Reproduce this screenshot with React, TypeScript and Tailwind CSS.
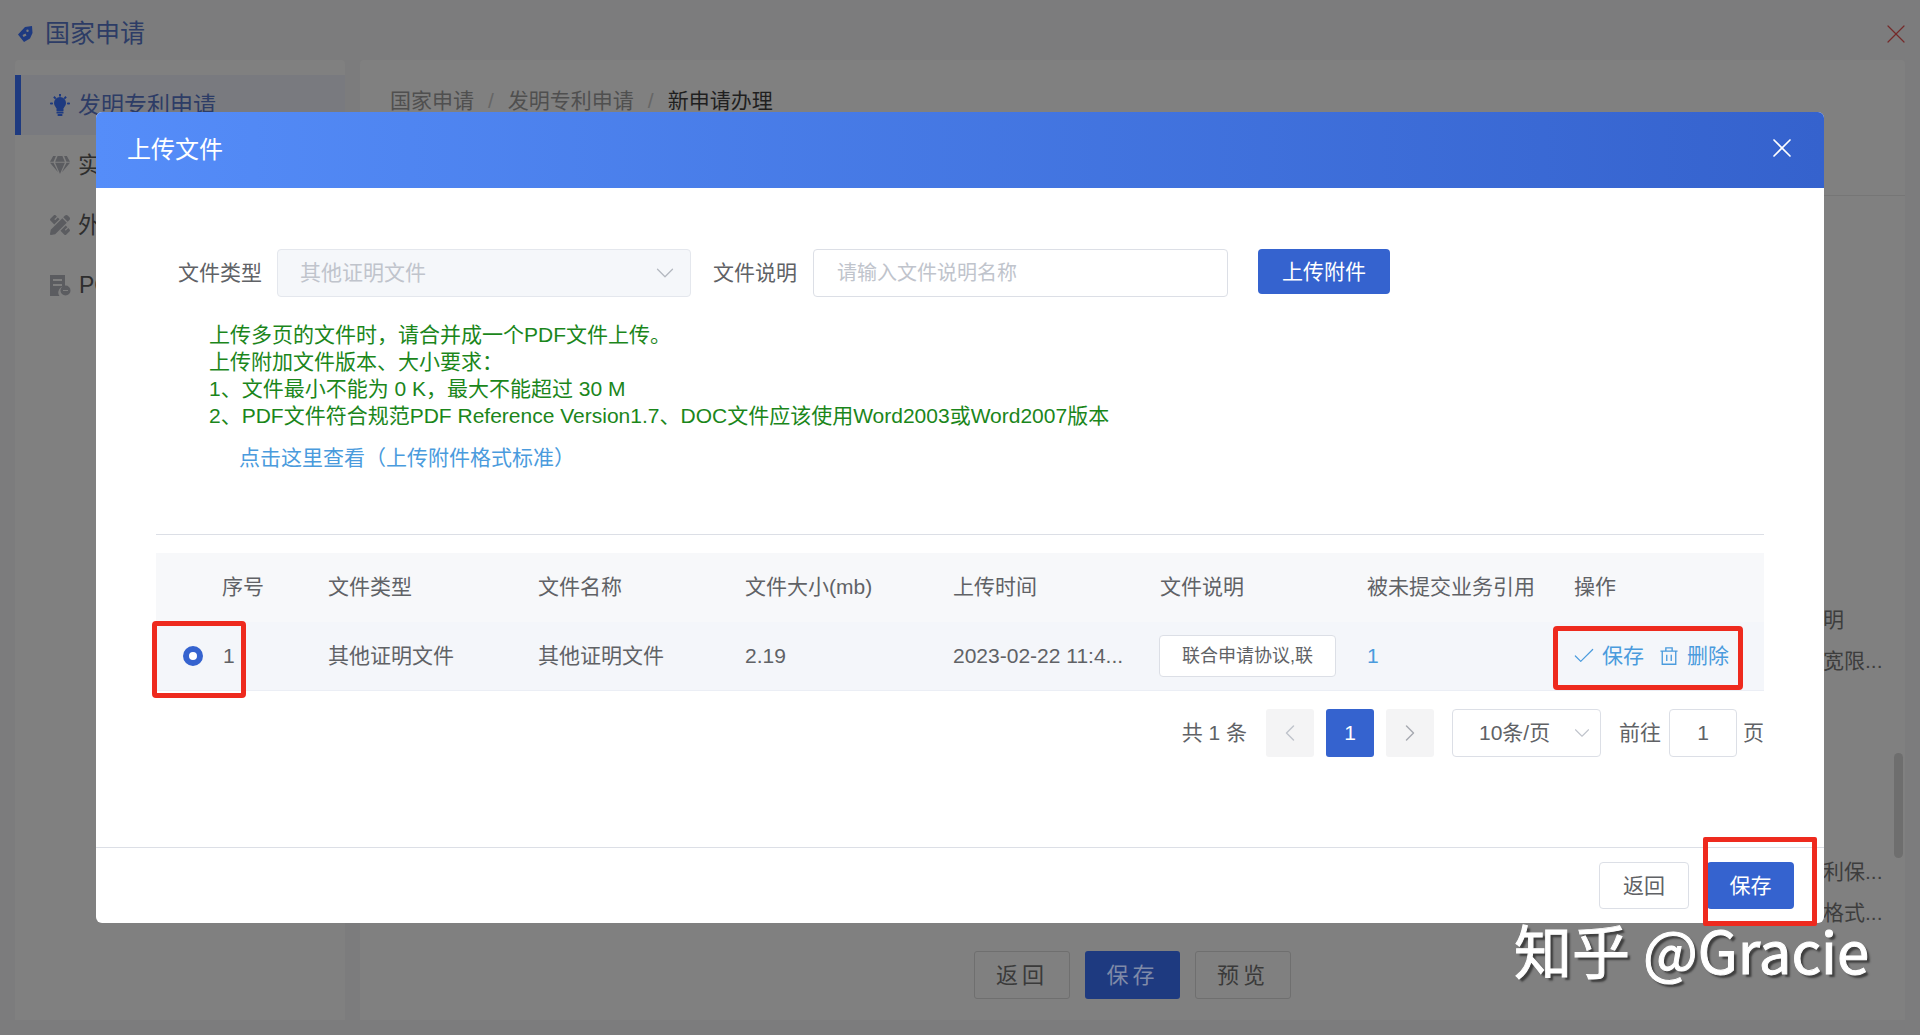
import { Check, ChevronDown, ChevronLeft, ChevronRight, X } from "lucide-react";
import { FaGem, FaPencilRuler } from "react-icons/fa";

const font = "font-['Liberation_Sans','Noto_Sans_CJK_SC',sans-serif]";

function TagIcon() {
  return (
    <svg viewBox="0 0 16 18" className="h-[18px] w-[16px]" fill="#1e3a80">
      <path d="M15 1L8 2 1 9.500 7 17l6-3.500L15.500 8zM10.500 4.500a1.200 1.200 0 1 1 0 2.400 1.200 1.200 0 0 1 0-2.400zM5.500 10l3-1.500 1 2-3 1.500z" fillRule="evenodd" />
    </svg>
  );
}

function BulbIcon() {
  return (
    <svg viewBox="0 0 20 22" className="h-[22px] w-[20px] shrink-0" fill="#1e3a80">
      <circle cx="10" cy="9" r="6" />
      <rect x="6.500" y="11" width="7" height="6" />
      <rect x="6.500" y="17.500" width="7" height="2" rx="0.5" />
      <rect x="7.500" y="20" width="5" height="2" rx="0.8" />
      <rect x="9" y="0" width="2" height="2.500" />
      <rect x="0" y="8.500" width="3" height="2" rx="0.8" />
      <rect x="17" y="8.500" width="3" height="2" rx="0.8" />
      <path d="M3.200 3.500l1.400-1.400 1.800 1.800L5 5.300zM16.800 3.500l-1.400-1.400-1.800 1.800L15 5.300z" />
    </svg>
  );
}

function FileIcon() {
  return (
    <svg viewBox="0 0 21 21" className="h-[21px] w-[21px] shrink-0" fill="#5b5c60">
      <path d="M0 0h15v11.500A6 6 0 0 0 9.500 21H0z" />
      <circle cx="15.500" cy="15.500" r="5" />
      <rect x="3" y="4" width="9" height="2" fill="#7f7f7f" />
      <rect x="3" y="9" width="9" height="2" fill="#7f7f7f" />
      <rect x="13" y="15" width="5" height="1" fill="#7f7f7f" />
    </svg>
  );
}

function TrashIcon() {
  return (
    <svg viewBox="0 0 20 20" className="h-[18px] w-[18px]" fill="none" stroke="#4a9bdd" strokeWidth="1.500">
      <path d="M0.500 4.500h19M6.500 4.500V1h7v3.500M2.500 4.500v14.700h15V4.500M7.500 8.500v7M12.500 8.500v7" />
    </svg>
  );
}

function MenuItem({ icon, label, active }: { icon: React.ReactNode; label: string; active?: boolean }) {
  return (
    <div
      className={`flex h-[60px] items-center gap-[8px] text-[23px] ${
        active ? "border-l-[6px] border-[#1e3a80] bg-[#797a7f] pl-[29px] text-[#2d3c66]" : "pl-[35px] text-[#2e2e2e]"
      }`}
    >
      {icon}
      <span className="whitespace-nowrap">{label}</span>
    </div>
  );
}

function PageBox({ children, className }: { children: React.ReactNode; className: string }) {
  return <div className={`flex h-[48px] items-center justify-center rounded-[3px] ${className}`}>{children}</div>;
}

const columns = "grid grid-cols-[160px_210px_207px_208px_207px_207px_207px_203px] items-center";

export default function App() {
  return (
    <div className={`relative h-screen w-full overflow-hidden bg-[#7c7c7d] ${font}`}>
      {/* page behind the dialog */}
      <div className="flex h-[60px] items-center pl-[17px] pt-[7px]">
        <TagIcon />
        <span className="ml-[12px] text-[25px] text-[#2d3c66]">国家申请</span>
        <X className="ml-auto mr-[8px] h-[32px] w-[32px] text-[#752a2a]" strokeWidth={0.9} />
      </div>
      <div className="flex h-[960px] gap-[15px] px-[15px]">
        <aside className="flex w-[330px] flex-col rounded-t-[4px] bg-[#808080] pt-[15px]">
          <MenuItem active icon={<BulbIcon />} label="发明专利申请" />
          <MenuItem icon={<FaGem className="h-[20px] w-[20px] shrink-0 text-[#5b5c60]" />} label="实用新型专利申请" />
          <MenuItem icon={<FaPencilRuler className="h-[20px] w-[20px] shrink-0 text-[#5b5c60]" />} label="外观设计专利申请" />
          <MenuItem icon={<FileIcon />} label="PCT国际申请" />
        </aside>
        <main className="flex flex-1 flex-col rounded-t-[4px] bg-[#808080]">
          <div className="flex h-[136px] items-start gap-[14px] border-b border-[#767676] pl-[30px] pt-[27px] text-[21px] leading-[28px] text-[#4f4f4f]">
            <span>国家申请</span>
            <span className="text-[#666]">/</span>
            <span>发明专利申请</span>
            <span className="text-[#666]">/</span>
            <span className="text-[#1f1f1f]">新申请办理</span>
          </div>
          <div className="flex flex-1 justify-between">
            <div className="flex flex-1 flex-col items-center justify-end pb-[21px]">
              <div className="flex gap-[15px] pl-[82px] text-[22px] tracking-[4px]">
                <div className="flex h-[48px] w-[96px] items-center justify-center rounded-[3px] border border-[#6f6f6f] text-[#3a3a3a]">返回</div>
                <div className="flex h-[48px] w-[95px] items-center justify-center rounded-[3px] bg-[#1e3a80] text-[#7f8aa8]">保存</div>
                <div className="flex h-[48px] w-[96px] items-center justify-center rounded-[3px] border border-[#6f6f6f] text-[#3a3a3a]">预览</div>
              </div>
            </div>
            <div className="relative flex w-[82px] shrink-0 flex-col pr-[28px] pt-[408px] text-right text-[21px] leading-[32px] text-[#3d3d3d]">
              <div className="mr-[39px] whitespace-nowrap">明</div>
              <div className="mt-[9px] whitespace-nowrap">宽限...</div>
              <div className="mt-[179px] whitespace-nowrap">利保...</div>
              <div className="mt-[9px] whitespace-nowrap">格式...</div>
              <div className="absolute right-[2px] top-[557px] h-[105px] w-[9px] rounded-full bg-[#6e6e6e]" />
            </div>
          </div>
        </main>
      </div>

      {/* dialog */}
      <div className="absolute left-[96px] top-[112px] flex h-[811px] w-[1728px] flex-col rounded-[6px] bg-white">
        <div className="flex h-[76px] shrink-0 items-center justify-between rounded-t-[6px] bg-gradient-to-r from-[#558df9] to-[#3562cd] pl-[31px] pr-[26px] text-white">
          <span className="text-[24px]">上传文件</span>
          <X className="mb-[4px] h-[32px] w-[32px]" strokeWidth={1.25} />
        </div>

        <div className="flex pl-[82px] pt-[61px] text-[21px] text-[#606266]">
          <span className="mr-[15px] flex h-[48px] items-center">文件类型</span>
          <div className="flex h-[48px] w-[414px] items-center justify-between rounded-[4px] border border-[#e4e7ed] bg-[#f5f7fa] pl-[22px] pr-[10px] text-[#c0c4cc]">
            <span>其他证明文件</span>
            <ChevronDown className="h-[30px] w-[30px] text-[#b4b8c0]" strokeWidth={1} />
          </div>
          <span className="ml-[22px] mr-[16px] flex h-[48px] items-center">文件说明</span>
          <div className="flex h-[48px] w-[415px] items-center rounded-[4px] border border-[#dcdfe6] pl-[23px] text-[20px] text-[#c0c4cc]">请输入文件说明名称</div>
          <div className="ml-[30px] flex h-[45px] w-[132px] items-center justify-center rounded-[4px] bg-[#3563cf] text-white">上传附件</div>
        </div>

        <div className="mt-[24px] pl-[113px] text-[21px] leading-[27px] text-[#1b861b]">
          <p>上传多页的文件时，请合并成一个PDF文件上传。</p>
          <p>上传附加文件版本、大小要求：</p>
          <p>1、文件最小不能为 0 K，最大不能超过 30 M</p>
          <p>2、PDF文件符合规范PDF Reference Version1.7、DOC文件应该使用Word2003或Word2007版本</p>
        </div>
        <p className="mt-[15px] pl-[143px] text-[21px] leading-[27px] text-[#4a9bdd]">点击这里查看（上传附件格式标准）</p>

        <div className="mx-[60px] mt-[63px] border-t border-[#dcdfe6]" />

        <div className="mx-[60px] mt-[18px] text-[21px] text-[#606266]">
          <div className={`${columns} h-[69px] bg-[#f7f8fa] pb-[2px]`}>
            <span className="pl-[66px]">序号</span>
            <span className="pl-[12px]">文件类型</span>
            <span className="pl-[12px]">文件名称</span>
            <span className="pl-[12px]">文件大小(mb)</span>
            <span className="pl-[12px]">上传时间</span>
            <span className="pl-[12px]">文件说明</span>
            <span className="whitespace-nowrap pl-[12px]">被未提交业务引用</span>
            <span className="pl-[12px]">操作</span>
          </div>
          <div className={`${columns} h-[69px] border-b border-[#ebeef5] bg-[#f4f6fa]`}>
            <div className="flex items-center pl-[27px]">
              <span className="h-[20px] w-[20px] rounded-full border-[6px] border-[#3563cf] bg-white" />
              <span className="ml-[20px]">1</span>
            </div>
            <span className="pl-[12px]">其他证明文件</span>
            <span className="pl-[12px]">其他证明文件</span>
            <span className="pl-[12px]">2.19</span>
            <span className="whitespace-nowrap pl-[12px]">2023-02-22 11:4...</span>
            <div className="pl-[11px]">
              <div className="flex h-[42px] w-[177px] items-center justify-center rounded-[4px] border border-[#dcdfe6] bg-white text-[18px]">联合申请协议,联</div>
            </div>
            <span className="pl-[12px] text-[#4a9bdd]">1</span>
            <div className="flex items-center pl-[9px] text-[#4a9bdd]">
              <Check className="h-[26px] w-[26px] text-[#4a9bdd]" strokeWidth={1.1} />
              <span className="ml-[5px]">保存</span>
              <span className="ml-[16px]"><TrashIcon /></span>
              <span className="ml-[9px]">删除</span>
            </div>
          </div>
        </div>

        <div className="mx-[60px] mt-[18px] flex items-center justify-end text-[21px] text-[#606266]">
          <span className="mr-[19px]">共 1 条</span>
          <PageBox className="w-[48px] bg-[#f4f4f5] text-[#c0c4cc]"><ChevronLeft className="h-[28px] w-[28px]" strokeWidth={1.25} /></PageBox>
          <PageBox className="ml-[12px] w-[48px] bg-[#3563cf] text-white">1</PageBox>
          <PageBox className="ml-[12px] w-[48px] bg-[#f4f4f5] text-[#a8abb2]"><ChevronRight className="h-[28px] w-[28px]" strokeWidth={1.25} /></PageBox>
          <div className="ml-[18px] flex h-[48px] w-[149px] items-center justify-between rounded-[4px] border border-[#dcdfe6] pl-[26px] pr-[5px]">
            <span>10条/页</span>
            <ChevronDown className="h-[26px] w-[26px] text-[#c0c4cc]" strokeWidth={1} />
          </div>
          <span className="ml-[18px]">前往</span>
          <div className="ml-[8px] flex h-[48px] w-[68px] items-center justify-center rounded-[4px] border border-[#dcdfe6]">1</div>
          <span className="ml-[6px]">页</span>
        </div>

        <div className="mt-auto flex h-[76px] items-start justify-end gap-[18px] border-t border-[#dcdfe6] pr-[30px] pt-[14px] text-[21px]">
          <div className="flex h-[47px] w-[90px] items-center justify-center rounded-[4px] border border-[#dcdfe6] text-[#606266]">返回</div>
          <div className="flex h-[47px] w-[87px] items-center justify-center rounded-[4px] bg-[#3563cf] text-white">保存</div>
        </div>
      </div>

      {/* annotations drawn over the shot */}
      <div className="absolute left-[152px] top-[621px] h-[77px] w-[94px] rounded-[4px] border-[5px] border-[#ee2a1e]" />
      <div className="absolute left-[1553px] top-[626px] h-[64px] w-[190px] rounded-[4px] border-[5px] border-[#ee2a1e]" />
      <div className="absolute left-[1703px] top-[837px] h-[89px] w-[114px] rounded-[2px] border-[5px] border-[#ee2a1e]" />

      <div className="absolute left-[1514px] top-[909px] whitespace-nowrap font-['Noto_Sans_CJK_SC',sans-serif] text-[58px] leading-[80px] text-white [-webkit-text-stroke:1px_white] [text-shadow:3px_3px_2px_rgba(40,40,40,0.75)]">
        知乎 @Gracie
      </div>
    </div>
  );
}
